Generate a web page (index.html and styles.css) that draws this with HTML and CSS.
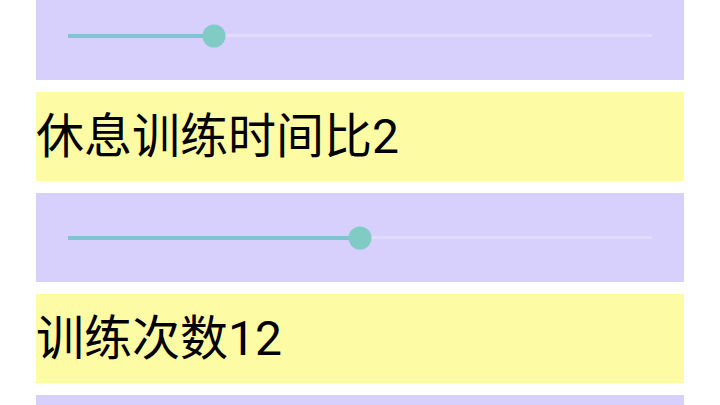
FILE: index.html
```html
<!DOCTYPE html>
<html lang="zh">
<head>
<meta charset="utf-8">
<link rel="stylesheet" href="styles.css">
</head>
<body>
<div class="list">
  <div class="row slider-row"><div class="slider"><div class="track"><div class="fill" style="width:25%"></div><div class="thumb" style="left:25%"></div></div></div></div>
  <div class="row label-row">休息训练时间比2</div>
  <div class="row slider-row"><div class="slider"><div class="track"><div class="fill" style="width:50%"></div><div class="thumb" style="left:50%"></div></div></div></div>
  <div class="row label-row">训练次数12</div>
  <div class="row slider-row short"></div>
</div>
</body>
</html>
```
FILE: styles.css
```css
html, body {
  margin: 0;
  padding: 0;
  background: #ffffff;
  overflow: hidden;
  width: 720px;
  height: 405px;
}
.list {
  display: flex;
  flex-direction: column;
  gap: 12px;
  padding: 0 36px;
  margin-top: -9px;
}
.row {
  height: 89px;
  flex: none;
}
.row.short {
  height: 10px;
}
.slider-row {
  background: #d7d0fd;
  display: flex;
  align-items: center;
  padding: 0 32px;
}
.slider {
  flex: 1;
  height: 24px;
  display: flex;
  align-items: center;
}
.track {
  position: relative;
  width: 100%;
  height: 3px;
  background: #e3dbfd;
}
.fill {
  position: absolute;
  left: 0;
  top: -0.5px;
  height: 4px;
  background: #80c4cf;
}
.thumb {
  position: absolute;
  top: 50%;
  width: 23px;
  height: 23px;
  border-radius: 50%;
  background: #80cbc4;
  transform: translate(-50%, -50%);
}
.label-row {
  background: #fdfca5;
  font-family: Roboto, "Noto Sans CJK SC", sans-serif;
  font-size: 48px;
  line-height: 89px;
  color: #000000;
  white-space: nowrap;
}
```
